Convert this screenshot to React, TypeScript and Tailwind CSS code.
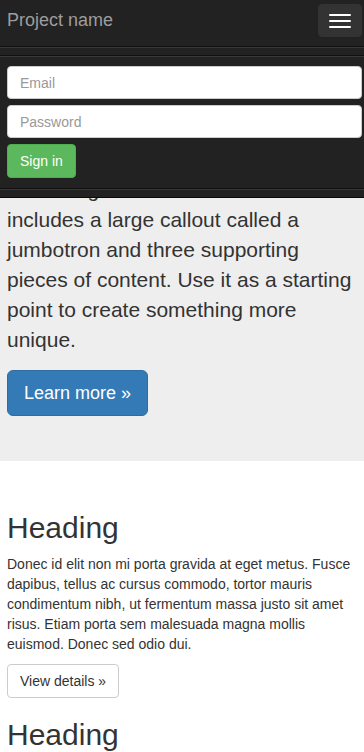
export default function App() {
  return (
    <div className="min-h-screen bg-white pt-[46px] font-['Liberation_Sans',Arial,sans-serif] text-[14px] leading-5 text-[#333]">
      <nav className="fixed inset-x-0 top-0 z-10 border-b border-[#080808] bg-[#222]">
        <div className="flex h-[46px] items-start justify-between pl-[7px] pr-[2px]">
          <a href="#" className="pt-[10px] text-[18px] leading-5 text-[#9d9d9d]">
            Project name
          </a>
          <button
            type="button"
            className="mt-[4px] flex h-[33px] w-[44px] flex-col items-center justify-center gap-[4px] rounded border border-[#333] bg-[#333]"
          >
            <span className="block h-[2px] w-[22px] rounded-[1px] bg-white" />
            <span className="block h-[2px] w-[22px] rounded-[1px] bg-white" />
            <span className="block h-[2px] w-[22px] rounded-[1px] bg-white" />
          </button>
        </div>

        <div className="border-t border-[#101010] pt-2 pb-2 shadow-[inset_0_1px_0_rgba(255,255,255,0.1)]">
          <form className="flex flex-col items-start gap-[6px] border-y border-[#101010] py-[10px] pl-[7px] pr-[2px] shadow-[inset_0_1px_0_rgba(255,255,255,0.1),0_1px_0_rgba(255,255,255,0.1)]">
            <input
              type="text"
              placeholder="Email"
              className="h-[33px] w-full rounded border border-[#ccc] bg-white px-3 text-[14px] text-[#555] placeholder:text-[#999]"
            />
            <input
              type="password"
              placeholder="Password"
              className="h-[33px] w-full rounded border border-[#ccc] bg-white px-3 text-[14px] text-[#555] placeholder:text-[#999]"
            />
            <button
              type="submit"
              className="h-[34px] rounded border border-[#4cae4c] bg-[#5cb85c] px-3 text-[14px] text-white"
            >
              Sign in
            </button>
          </form>
        </div>
      </nav>

      {/* jumbotron sits under the fixed navbar */}
      <div className="bg-[#eee] px-[7px] pt-[29px] pb-[30px]">
        <h1 className="mt-5 mb-[10px] text-[36px] font-medium leading-[1.1]">Hello, world!</h1>
        <p className="mb-[15px] text-[21px] leading-[30px]">
          This is a template for a simple marketing or informational website. It includes a large
          callout called a jumbotron and three supporting pieces of content. Use it as a starting
          point to create something more unique.
        </p>
        <p className="mb-[15px]">
          <a
            href="#"
            className="inline-block rounded-md border border-[#2e6da4] bg-[#337ab7] px-4 py-[10px] text-[18px] leading-[24px] text-white"
          >
            Learn more &raquo;
          </a>
        </p>
      </div>

      <div className="mt-[50px] px-[7px]">
        {[0, 1, 2].map((i) => (
          <div key={i}>
            <h2 className="mt-5 mb-[10px] text-[30px] font-medium leading-[1.1]">Heading</h2>
            <p className="mb-[10px]">
              Donec id elit non mi porta gravida at eget metus. Fusce dapibus, tellus ac cursus
              commodo, tortor mauris condimentum nibh, ut fermentum massa justo sit amet risus.
              Etiam porta sem malesuada magna mollis euismod. Donec sed odio dui.
            </p>
            <p className="mb-[10px]">
              <a
                href="#"
                className="inline-block rounded border border-[#ccc] bg-white px-3 py-[6px] text-[14px] leading-5 text-[#333]"
              >
                View details &raquo;
              </a>
            </p>
          </div>
        ))}
      </div>
    </div>
  );
}
